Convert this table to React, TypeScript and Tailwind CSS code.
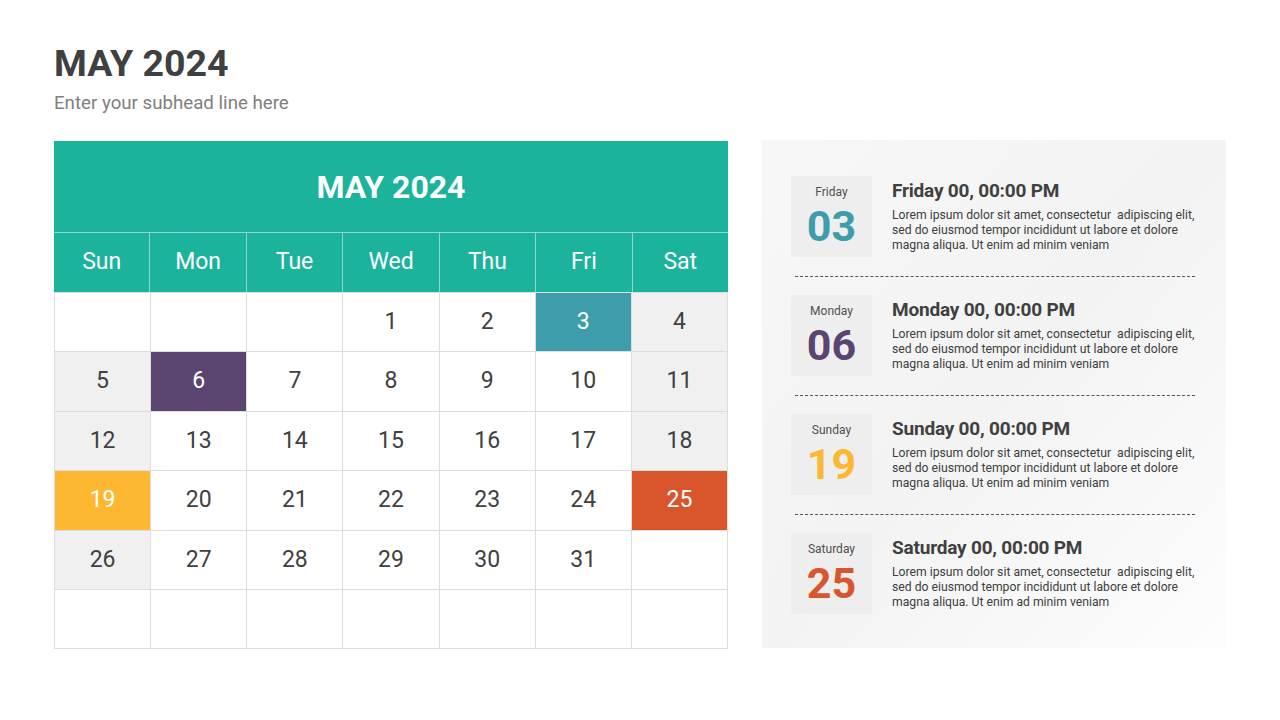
import React from "react";

const days = ["Sun", "Mon", "Tue", "Wed", "Thu", "Fri", "Sat"];

type Cell = { n?: number; bg: string; fg: string };

const hl: Record<number, string> = {
  3: "bg-[#3d9dab]",
  6: "bg-[#5a4570]",
  19: "bg-[#fdb731]",
  25: "bg-[#d9552c]",
};

function buildCells(): Cell[] {
  const cells: Cell[] = [];
  for (let i = 0; i < 42; i++) {
    const n = i - 2;
    const valid = n >= 1 && n <= 31;
    const col = i % 7;
    if (!valid) {
      cells.push({ bg: "bg-white", fg: "text-[#404040]" });
      continue;
    }
    if (hl[n]) {
      cells.push({ n, bg: hl[n], fg: "text-white" });
    } else if (col === 0 || col === 6) {
      cells.push({ n, bg: "bg-[#f0f0f0]", fg: "text-[#404040]" });
    } else {
      cells.push({ n, bg: "bg-white", fg: "text-[#404040]" });
    }
  }
  return cells;
}

const events = [
  { day: "Friday", num: "03", color: "text-[#3d9dab]" },
  { day: "Monday", num: "06", color: "text-[#5a4570]" },
  { day: "Sunday", num: "19", color: "text-[#fdb731]" },
  { day: "Saturday", num: "25", color: "text-[#d9552c]" },
];

export default function App() {
  const cells = buildCells();
  return (
    <div
      className="w-[1280px] h-[720px] bg-white overflow-hidden"
      style={{ fontFamily: "Roboto, 'Liberation Sans', sans-serif" }}
    >
      <div className="pl-[54px] pt-[42px]">
        <h1 className="text-[37.5px] leading-[42px] font-bold text-[#404040]">MAY 2024</h1>
        <p className="text-[18.7px] leading-[22px] mt-[8px] text-[#808080]">Enter your subhead line here</p>
      </div>
      <div className="flex pl-[54px] mt-[27px] gap-[34px] items-start">
        {/* calendar */}
        <div className="w-[674px]">
          <div className="h-[91px] bg-[#1bb39c] flex items-center justify-center">
            <span className="text-white font-bold text-[32px]">MAY 2024</span>
          </div>
          <div className="grid grid-cols-7 gap-px bg-[#8fd8cc] pt-px">
            {days.map((d) => (
              <div
                key={d}
                className="h-[59px] bg-[#1bb39c] flex items-center justify-center text-white text-[23px]"
              >
                {d}
              </div>
            ))}
          </div>
          <div className="grid grid-cols-7 gap-px bg-[#dddddd] border border-t-0 border-[#dddddd] pt-px">
            {cells.map((c, i) => (
              <div
                key={i}
                className={`h-[58.4px] flex items-center justify-center text-[23px] ${c.bg} ${c.fg}`}
              >
                {c.n ?? ""}
              </div>
            ))}
          </div>
        </div>
        {/* events panel */}
        <div className="w-[464px] h-[508px] -mt-px bg-gradient-to-br from-[#f7f7f7] via-[#f3f3f3] to-[#fdfdfd] pl-[29px] pr-[31px] pt-[36px]">
          {events.map((e, i) => (
            <div key={e.day}>
              {i > 0 && <div className="ml-[4px] border-t border-dashed border-[#555555] mt-[19px] mb-[18px]" />}
              <div className="flex gap-[20px]">
                <div className="w-[81px] h-[81px] bg-[#eeeeee] flex flex-col items-center pt-[9px] shrink-0">
                  <span className="text-[12px] leading-[14px] text-[#505050]">{e.day}</span>
                  <span className={`text-[43px] leading-[46px] font-bold mt-[4px] ${e.color}`}>{e.num}</span>
                </div>
                <div className="pt-[4px]">
                  <div className="text-[19px] leading-[22px] font-bold text-[#404040] tracking-[-0.2px]">
                    {e.day} 00, 00:00 PM
                  </div>
                  <p className="text-[12.2px] leading-[15px] text-[#404040] mt-[6px]">
                    Lorem ipsum dolor sit amet, consectetur&nbsp; adipiscing elit,
                    <br />
                    sed do eiusmod tempor incididunt ut labore et dolore
                    <br />
                    magna aliqua. Ut enim ad minim veniam
                  </p>
                </div>
              </div>
            </div>
          ))}
        </div>
      </div>
    </div>
  );
}
